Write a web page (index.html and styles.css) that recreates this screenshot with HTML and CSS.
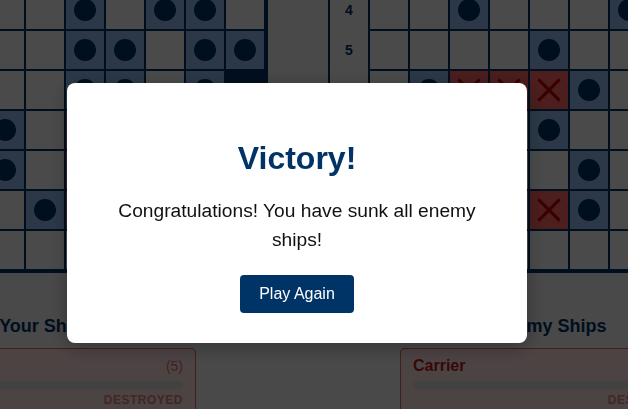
FILE: index.html
```html
<!DOCTYPE html>
<html lang="en">
<head>
<meta charset="utf-8">
<title>Battleship</title>
<link rel="stylesheet" href="styles.css">
</head>
<body>
<main class="game">
  <section class="boards">
    <!-- player board -->
    <div class="board">
      <div class="row-labels"><span>1</span><span>2</span><span>3</span><span>4</span><span>5</span><span>6</span><span>7</span><span>8</span><span>9</span><span>10</span></div>
      <div class="grid">
        <span class="cell"></span><span class="cell"></span><span class="cell miss"></span><span class="cell"></span><span class="cell"></span><span class="cell"></span><span class="cell"></span><span class="cell miss"></span><span class="cell"></span><span class="cell"></span>
        <span class="cell"></span><span class="cell miss"></span><span class="cell"></span><span class="cell"></span><span class="cell"></span><span class="cell"></span><span class="cell"></span><span class="cell"></span><span class="cell"></span><span class="cell"></span>
        <span class="cell"></span><span class="cell"></span><span class="cell"></span><span class="cell"></span><span class="cell miss"></span><span class="cell"></span><span class="cell"></span><span class="cell"></span><span class="cell"></span><span class="cell"></span>
        <span class="cell"></span><span class="cell"></span><span class="cell miss"></span><span class="cell"></span><span class="cell"></span><span class="cell miss"></span><span class="cell"></span><span class="cell miss"></span><span class="cell miss"></span><span class="cell"></span>
        <span class="cell"></span><span class="cell"></span><span class="cell"></span><span class="cell"></span><span class="cell"></span><span class="cell miss"></span><span class="cell miss"></span><span class="cell"></span><span class="cell miss"></span><span class="cell miss"></span>
        <span class="cell miss"></span><span class="cell"></span><span class="cell"></span><span class="cell"></span><span class="cell"></span><span class="cell miss"></span><span class="cell miss"></span><span class="cell"></span><span class="cell miss"></span><span class="cell ship"></span>
        <span class="cell"></span><span class="cell"></span><span class="cell"></span><span class="cell miss"></span><span class="cell"></span><span class="cell hit"></span><span class="cell"></span><span class="cell"></span><span class="cell miss"></span><span class="cell ship"></span>
        <span class="cell"></span><span class="cell"></span><span class="cell miss"></span><span class="cell miss"></span><span class="cell"></span><span class="cell hit"></span><span class="cell"></span><span class="cell miss"></span><span class="cell"></span><span class="cell ship"></span>
        <span class="cell"></span><span class="cell"></span><span class="cell"></span><span class="cell"></span><span class="cell miss"></span><span class="cell hit"></span><span class="cell"></span><span class="cell"></span><span class="cell"></span><span class="cell ship"></span>
        <span class="cell"></span><span class="cell miss"></span><span class="cell"></span><span class="cell"></span><span class="cell"></span><span class="cell"></span><span class="cell miss"></span><span class="cell"></span><span class="cell"></span><span class="cell"></span>
      </div>
    </div>
    <!-- enemy board -->
    <div class="board">
      <div class="row-labels"><span>1</span><span>2</span><span>3</span><span>4</span><span>5</span><span>6</span><span>7</span><span>8</span><span>9</span><span>10</span></div>
      <div class="grid">
        <span class="cell"></span><span class="cell"></span><span class="cell"></span><span class="cell miss"></span><span class="cell"></span><span class="cell"></span><span class="cell"></span><span class="cell"></span><span class="cell miss"></span><span class="cell"></span>
        <span class="cell"></span><span class="cell miss"></span><span class="cell"></span><span class="cell"></span><span class="cell"></span><span class="cell"></span><span class="cell miss"></span><span class="cell"></span><span class="cell"></span><span class="cell"></span>
        <span class="cell"></span><span class="cell"></span><span class="cell"></span><span class="cell"></span><span class="cell"></span><span class="cell miss"></span><span class="cell"></span><span class="cell"></span><span class="cell"></span><span class="cell"></span>
        <span class="cell"></span><span class="cell"></span><span class="cell miss"></span><span class="cell"></span><span class="cell"></span><span class="cell"></span><span class="cell miss"></span><span class="cell"></span><span class="cell"></span><span class="cell"></span>
        <span class="cell"></span><span class="cell"></span><span class="cell"></span><span class="cell"></span><span class="cell miss"></span><span class="cell"></span><span class="cell"></span><span class="cell"></span><span class="cell miss"></span><span class="cell"></span>
        <span class="cell"></span><span class="cell miss"></span><span class="cell hit"></span><span class="cell hit"></span><span class="cell hit"></span><span class="cell miss"></span><span class="cell"></span><span class="cell"></span><span class="cell"></span><span class="cell"></span>
        <span class="cell"></span><span class="cell"></span><span class="cell miss"></span><span class="cell"></span><span class="cell miss"></span><span class="cell"></span><span class="cell"></span><span class="cell miss"></span><span class="cell"></span><span class="cell"></span>
        <span class="cell miss"></span><span class="cell"></span><span class="cell"></span><span class="cell"></span><span class="cell"></span><span class="cell miss"></span><span class="cell"></span><span class="cell"></span><span class="cell"></span><span class="cell"></span>
        <span class="cell"></span><span class="cell"></span><span class="cell"></span><span class="cell miss"></span><span class="cell hit"></span><span class="cell miss"></span><span class="cell"></span><span class="cell"></span><span class="cell"></span><span class="cell"></span>
        <span class="cell"></span><span class="cell"></span><span class="cell"></span><span class="cell"></span><span class="cell"></span><span class="cell"></span><span class="cell"></span><span class="cell"></span><span class="cell miss"></span><span class="cell"></span>
      </div>
    </div>
  </section>

  <section class="fleets">
    <div class="fleet">
      <h3>Your Ships</h3>
      <div class="ship-list">
        <div class="ship-card sunk">
          <div class="ship-head"><span class="ship-name">Carrier</span><span class="ship-size">(5)</span></div>
          <div class="ship-bar"></div>
          <div class="ship-status">Destroyed</div>
        </div>
      </div>
    </div>
    <div class="fleet">
      <h3>Enemy Ships</h3>
      <div class="ship-list">
        <div class="ship-card sunk">
          <div class="ship-head"><span class="ship-name">Carrier</span><span class="ship-size">(5)</span></div>
          <div class="ship-bar"></div>
          <div class="ship-status">Destroyed</div>
        </div>
      </div>
    </div>
  </section>
</main>

<div class="overlay">
  <div class="modal">
    <h2>Victory!</h2>
    <p>Congratulations! You have sunk all enemy ships!</p>
    <button class="btn" type="button">Play Again</button>
  </div>
</div>
</body>
</html>
```
FILE: styles.css
```css
html, body {
  margin: 0;
  height: 100%;
  overflow: hidden;
}

body {
  background: #f4f4f4;
  color: #222;
  font-family: "Liberation Sans", Arial, sans-serif;
}

.game {
  display: flex;
  flex-direction: column;
  width: 948px;
  margin: -133px 0 0 -176px;
}

.boards {
  display: flex;
  gap: 60px;
}

.board {
  display: flex;
  border: 2px solid #003366;
  background: #f8f9fa;
}

.row-labels {
  display: flex;
  flex-direction: column;
  gap: 2px;
  width: 38px;
  padding: 2px 0;
}

.row-labels span {
  height: 38px;
  display: flex;
  align-items: center;
  justify-content: center;
  font-size: 14px;
  font-weight: bold;
  color: #003366;
}

.grid {
  display: grid;
  grid-template-columns: repeat(10, 38px);
  grid-auto-rows: 38px;
  gap: 2px;
  padding: 2px;
  background: #003366;
}

.cell {
  position: relative;
  display: flex;
  align-items: center;
  justify-content: center;
  background: #f8f9fa;
}

.cell.miss {
  background: #94bdf0;
}

.cell.miss::after {
  content: "";
  width: 22px;
  height: 22px;
  border-radius: 50%;
  background: #003366;
}

.cell.hit {
  background: #ff6464;
}

.cell.hit::before,
.cell.hit::after {
  content: "";
  position: absolute;
  left: 50%;
  top: 50%;
  width: 30px;
  height: 3px;
  background: #c00000;
  transform: translate(-50%, -50%) rotate(45deg);
}

.cell.hit::after {
  transform: translate(-50%, -50%) rotate(-45deg);
}

.cell.ship {
  background: #003366;
}

/* fleet status */
.fleets {
  display: flex;
  gap: 60px;
  margin-top: 24px;
}

.fleet {
  width: 444px;
  display: flex;
  flex-direction: column;
  align-items: center;
}

.fleet h3 {
  margin: 19px 0 11px;
  font-size: 18px;
  color: #003366;
}

.ship-list {
  width: 300px;
  display: flex;
  flex-direction: column;
  gap: 10px;
}

.ship-card {
  border: 1px solid #e06666;
  border-radius: 4px;
  background: #ffe2e2;
  padding: 8px 12px;
}

.ship-head {
  display: flex;
  justify-content: space-between;
  align-items: baseline;
}

.ship-name {
  font-size: 16px;
  font-weight: bold;
  color: #b71c1c;
}

.ship-size {
  font-size: 14px;
  color: #d27272;
}

.ship-bar {
  height: 8px;
  margin-top: 6px;
  border-radius: 4px;
  background: #dcdcdc;
}

.ship-status {
  margin-top: 4px;
  text-align: right;
  font-size: 12px;
  font-weight: bold;
  letter-spacing: 0.5px;
  text-transform: uppercase;
  color: #d98080;
}

/* result dialog */
.overlay {
  position: fixed;
  inset: 0;
  display: flex;
  align-items: center;
  justify-content: center;
  padding: 17px 34px 0 0;
  background: rgba(0, 0, 0, 0.7);
}

.modal {
  width: 460px;
  box-sizing: border-box;
  padding: 30px;
  border-radius: 8px;
  background: #fff;
  text-align: center;
  box-shadow: 0 4px 20px rgba(0, 0, 0, 0.3);
}

.modal h2 {
  margin: 27px 0 20px;
  font-size: 32px;
  color: #003366;
}

.modal p {
  margin: 0 0 20px;
  font-size: 19.2px;
  line-height: 1.5;
  color: #111;
}

.btn {
  padding: 10px 19px;
  border: 0;
  border-radius: 4px;
  background: #003366;
  color: #fff;
  font-family: "Liberation Sans", Arial, sans-serif;
  font-size: 16px;
  cursor: pointer;
}
```
